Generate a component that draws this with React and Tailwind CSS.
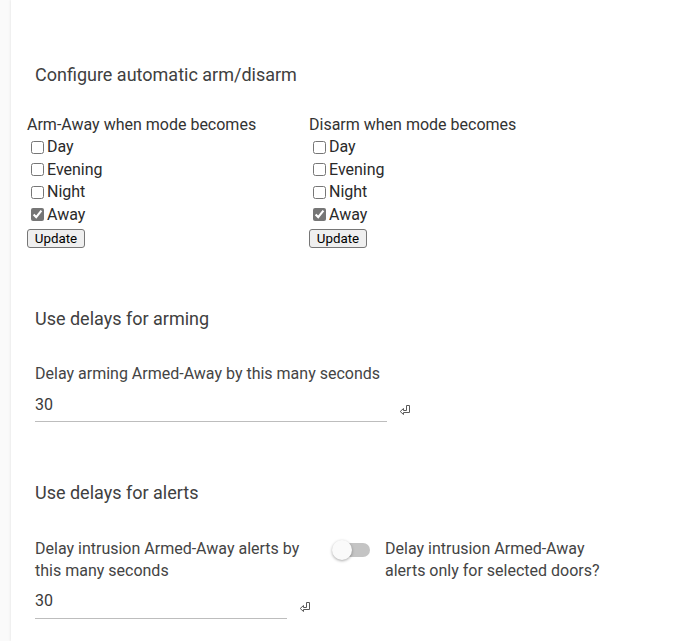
import React from "react";

function ReturnIcon() {
  return (
    <svg width="12" height="12" viewBox="0 0 12 12" className="shrink-0">
      <path
        d="M7.5 1.5 H10.5 V8.5 H4.5 V10.5 L1.2 7.5 L4.5 4.5 V6.5 H7.5 Z"
        fill="none"
        stroke="#5a5a5a"
        strokeWidth="1"
        strokeLinejoin="miter"
      />
    </svg>
  );
}

function Box({ checked }) {
  return (
    <input
      type="checkbox"
      defaultChecked={checked}
      className="m-0 ml-[4px] mr-[3px] h-[13px] w-[13px] accent-[#767676]"
    />
  );
}

function Column({ title }) {
  const rows = [
    ["Day", false],
    ["Evening", false],
    ["Night", false],
    ["Away", true],
  ];
  return (
    <div className="w-[282px] shrink-0">
      <div className="h-[21px] text-[16px] leading-[19px] text-[#333]">{title}</div>
      {rows.map(([l, c]) => (
        <label key={l} className="flex h-[22.5px] items-center text-[16px] text-[#2a2a2a]">
          <Box checked={c} />
          <span>{l}</span>
        </label>
      ))}
      <button className="mt-[3px] flex h-[19px] w-[58px] items-center justify-center rounded-[3px] border border-[#767676] bg-[#efefef] text-[13.33px] leading-none text-black">
        Update
      </button>
    </div>
  );
}

function Field({ width, h, pb }) {
  return (
    <div className="flex items-end">
      <div
        className={`${width} ${h} ${pb} flex items-end border-b border-[#bdbdbd] text-[16px] leading-[20px] text-[#3a3a3a]`}
      >
        30
      </div>
      <div className="mb-[6px] ml-[12px]">
        <ReturnIcon />
      </div>
    </div>
  );
}

export default function App() {
  return (
    <div
      className="min-h-screen bg-[#fafafa] pl-[11px]"
      style={{ fontFamily: "Roboto, 'Noto Sans', sans-serif" }}
    >
      <div className="min-h-[641px] bg-white pb-[20px] shadow-[-1px_0_2px_rgba(0,0,0,0.06)]">
        <div className="h-[63px]" />
        <h2 className="h-[24px] pl-[24px] text-[18px] leading-[24px] text-[#404040]">
          Configure automatic arm/disarm
        </h2>
        <div className="mt-[28px] flex pl-[16px]">
          <Column title="Arm-Away when mode becomes" />
          <Column title="Disarm when mode becomes" />
        </div>

        <h2 className="mt-[59px] h-[24px] pl-[24px] text-[18px] leading-[24px] text-[#404040]">
          Use delays for arming
        </h2>
        <div className="mt-[33px] pl-[24px]">
          <div className="h-[20px] text-[16px] leading-[20px] text-[#444]">
            Delay arming Armed-Away by this many seconds
          </div>
          <Field width="w-[352px]" h="h-[38px]" pb="pb-[6px]" />
        </div>

        <h2 className="mt-[59px] h-[24px] pl-[24px] text-[18px] leading-[24px] text-[#404040]">
          Use delays for alerts
        </h2>
        <div className="mt-[33px] flex pl-[24px]">
          <div className="w-[280px] shrink-0">
            <div className="text-[16px] leading-[22px] text-[#444]">
              Delay intrusion Armed-Away alerts by this many seconds
            </div>
            <Field width="w-[252px]" h="h-[37px]" pb="pb-[7px]" />
          </div>
          <div className="relative ml-[17px] mt-[2px] h-[20px] w-[38px] shrink-0">
            <div className="absolute left-[4px] top-[3px] h-[14px] w-[34px] rounded-full bg-[#c4c4c4]" />
            <div className="absolute left-0 top-0 h-[20px] w-[20px] rounded-full bg-[#fafafa] shadow-[0_1px_3px_rgba(0,0,0,0.35)]" />
          </div>
          <div className="ml-[15px] w-[240px] text-[16px] leading-[22px] text-[#444]">
            Delay intrusion Armed-Away alerts only for selected doors?
          </div>
        </div>
      </div>
    </div>
  );
}
